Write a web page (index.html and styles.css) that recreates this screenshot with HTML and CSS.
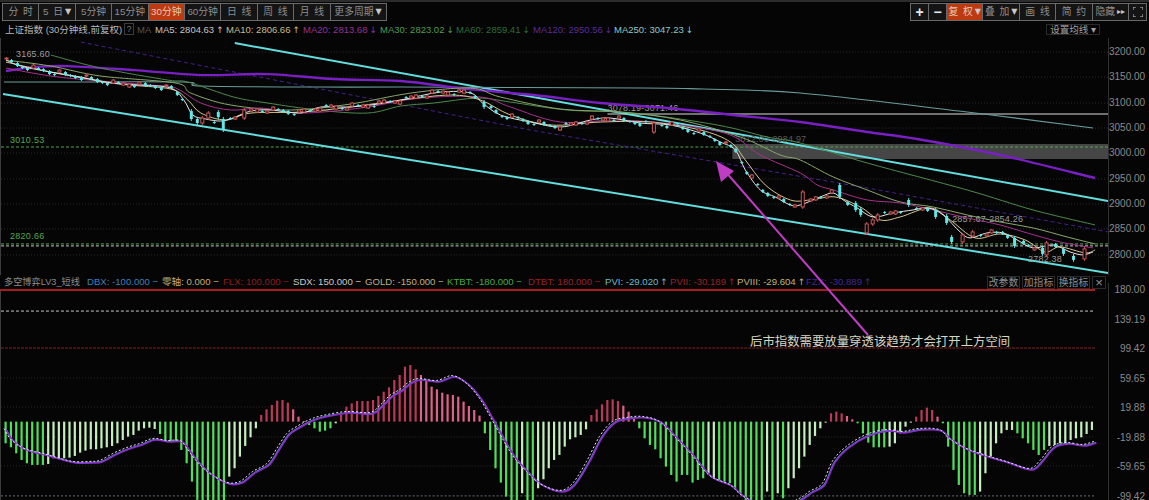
FILE: index.html
```html
<!DOCTYPE html>
<html lang="zh-CN">

<head>
    <meta charset="UTF-8">
    <meta name="viewport" content="width=device-width, initial-scale=1.0">
    <title>上证指数 30分钟线</title>
    <link rel="stylesheet" href="styles.css">
</head>

<body>
    <div class="terminal">
        <div class="toolbar">
            <div class="tool-group">
                <div class="tool-btn">分 时</div>
                <div class="tool-btn">5 日<span class="caret">▼</span></div>
                <div class="tool-btn">5分钟</div>
                <div class="tool-btn">15分钟</div>
                <div class="tool-btn active">30分钟</div>
                <div class="tool-btn">60分钟</div>
                <div class="tool-btn">日 线</div>
                <div class="tool-btn">周 线</div>
                <div class="tool-btn">月 线</div>
                <div class="tool-btn wide">更多周期<span class="caret">▼</span></div>
            </div>
            <div class="tool-group">
                <div class="tool-btn small strong">+</div>
                <div class="tool-btn small strong">−</div>
                <div class="tool-btn active">复 权<span class="caret">▼</span></div>
                <div class="tool-btn">叠 加<span class="caret">▼</span></div>
                <div class="tool-btn">画 线</div>
                <div class="tool-btn">简 约</div>
                <div class="tool-btn">隐藏<span class="caret">▸▸</span></div>
                <div class="tool-btn tiny">
                    <svg width="10" height="10" viewBox="0 0 10 10">
                        <path class="corner" d="M0 3V0H3M7 0H10V3M10 7V10H7M3 10H0V7" />
                    </svg>
                </div>
            </div>
        </div>

        <div class="info-row">
            <span class="index-name">上证指数 (30分钟线,前复权)</span>
            <span class="help-box">?</span>
            <span class="ma-title">MA</span>
            <span class="ma5">MA5: 2804.63<b>↑</b></span>
            <span class="ma10">MA10: 2806.66<b>↑</b></span>
            <span class="ma20">MA20: 2813.68<b>↓</b></span>
            <span class="ma30">MA30: 2823.02<b>↓</b></span>
            <span class="ma60">MA60: 2859.41<b>↓</b></span>
            <span class="ma120">MA120: 2950.56<b>↓</b></span>
            <span class="ma250">MA250: 3047.23<b>↓</b></span>
            <span class="ma-setting">设置均线 ▾</span>
        </div>

        <div class="main-panel">
            <svg id="mainChart" class="plot" viewBox="0 38 1108 237" width="1108" height="237">
                <g class="grid">
                    <path d="M0 52H1108M0 77H1108M0 103H1108M0 128H1108M0 153H1108M0 179H1108M0 204H1108M0 229H1108M0 255H1108" />
                </g>
                <rect class="zone" x="732" y="144" width="376" height="15" />
                <path class="flat-grey" d="M607 114H1108" />
                <path class="level-green" d="M0 147H1108M0 244H1108" />
                <path class="level-white" d="M0 246H1108" />
                <path class="channel-dash" d="M80 42L530 130L867 188L1108 232" />
                <path class="channel" d="M234 43L1108 201M2 94L1108 273" />
                <text class="level-label" x="9" y="143">3010.53</text>
                <text class="level-label" x="9" y="239">2820.66</text>
                <text class="price-label" x="15" y="57">3165.60</text>
                <text class="price-label" x="607" y="111">3078.19-3071.46</text>
                <text class="price-label dim" x="735" y="142">3012.00-2984.97</text>
                <text class="price-label" x="952" y="222">2857.67-2854.26</text>
                <text class="price-label" x="1028" y="262">2782.38</text>
            </svg>
            <div class="axis main-axis">
                <div>3200.00</div>
                <div>3150.00</div>
                <div>3100.00</div>
                <div>3050.00</div>
                <div>3000.00</div>
                <div>2950.00</div>
                <div>2900.00</div>
                <div>2850.00</div>
                <div>2800.00</div>
            </div>
        </div>

        <div class="indicator-row">
            <span class="ind-name">多空博弈LV3_短线</span>
            <span class="dbx">DBX: -100.000 −</span>
            <span class="zero">零轴: 0.000 −</span>
            <span class="flx">FLX: 100.000 −</span>
            <span class="sdx">SDX: 150.000 −</span>
            <span class="gold">GOLD: -150.000 −</span>
            <span class="ktbt">KTBT: -180.000 −</span>
            <span class="dtbt">DTBT: 180.000 −</span>
            <span class="pvi">PVI: -29.020<b>↑</b></span>
            <span class="pvii">PVII: -30.189<b>↑</b></span>
            <span class="pviii">PVIII: -29.604<b>↑</b></span>
            <span class="fzx">FZX: -30.889<b>↑</b></span>
            <div class="ind-buttons">
                <span class="ind-btn">改参数</span>
                <span class="ind-btn">加指标</span>
                <span class="ind-btn">换指标</span>
                <span class="ind-btn close">×</span>
            </div>
        </div>

        <div class="sub-panel">
            <svg id="subChart" class="plot" viewBox="0 291 1108 209" width="1108" height="209">
                <path class="grid" d="M0 378H1095M0 407H1095M0 437H1095M0 466H1095" />
                <path class="level-white" d="M0 311H1095" />
                <path class="level-red" d="M0 348H1095" />
                <path class="level-low" d="M0 496H1095" />
            </svg>
            <div class="axis sub-axis">
                <div>180.00</div>
                <div>139.19</div>
                <div>99.42</div>
                <div>59.65</div>
                <div>19.88</div>
                <div>-19.88</div>
                <div>-59.65</div>
                <div>-99.42</div>
            </div>
        </div>

        <!-- seta desenhada por cima dos paineis -->
        <svg class="arrow-layer" viewBox="0 0 1149 500" width="1149" height="500">
            <path class="arrow-line" d="M868 335L724 170" />
            <path class="arrow-head" d="M716 161L734 171L721 182Z" />
        </svg>
        <div class="note">后市指数需要放量穿透该趋势才会打开上方空间</div>
    </div>

    <script src="chart.js"></script>
</body>

</html>
```

FILE: styles.css
```css
* {
    margin: 0;
    padding: 0;
    box-sizing: border-box;
}

body {
    background-color: #050505;
    font-family: "Liberation Sans", "Noto Sans CJK SC", sans-serif;
    overflow: hidden;
}

b {
    font-family: "DejaVu Sans", sans-serif;
    font-size: 9px;
    font-weight: normal;
    margin-left: 2px;
}

.terminal {
    position: relative;
    width: 1149px;
    height: 500px;
    display: flex;
    flex-direction: column;
    overflow: hidden;
    background-color: #050505;
}

/* Toolbar */
.toolbar {
    height: 22px;
    padding: 1px 2px 0 2px;
    display: flex;
    justify-content: space-between;
    border-top: 2px solid #2c2c2c;
}

.tool-group {
    display: flex;
    height: 18px;
    border: 1px solid #6a6a6a;
}

.tool-btn {
    width: 36.4px;
    display: flex;
    justify-content: center;
    align-items: center;
    color: #8f8f8f;
    font-size: 9.8px;
    line-height: 1;
    word-spacing: 2px;
    white-space: pre;
    background-color: #141414;
    border-right: 1px solid #6a6a6a;
}

.tool-btn:last-child {
    border-right: none;
}

.tool-btn.wide {
    width: 55px;
}

.tool-btn.small {
    width: 18px;
}

.tool-btn.tiny {
    width: 17px;
}

.tool-btn.strong {
    color: #e8e8e8;
    font-size: 14px;
    font-weight: bold;
}

.tool-btn.active {
    background-color: #bd3a10;
    color: #e4c8b8;
}

.caret {
    font-family: "DejaVu Sans", sans-serif;
    font-size: 8px;
    color: #c8c8c8;
    margin-left: 2px;
}

.corner {
    fill: none;
    stroke: #c8c8c8;
    stroke-width: 1;
}

/* Info row */
.info-row {
    height: 16px;
    padding: 0 0 2px 5px;
    display: flex;
    align-items: center;
    font-size: 9.5px;
    white-space: nowrap;
}

.info-row span {
    flex: none;
}

.index-name {
    width: 119px;
    color: #b8b8b8;
}

.help-box {
    width: 10px;
    height: 12px;
    line-height: 11px;
    text-align: center;
    border: 1px solid #3c3c3c;
    color: #777;
    font-size: 9px;
    margin-right: 3px;
}

.ma-title {
    width: 18px;
    color: #555;
}

.ma5 {
    width: 71px;
    color: #c4c4c4;
}

.ma10 {
    width: 77px;
    color: #c9bb8a;
}

.ma20 {
    width: 77px;
    color: #96309a;
}

.ma30 {
    width: 76px;
    color: #4f9c4f;
}

.ma60 {
    width: 77px;
    color: #2c6e38;
}

.ma120 {
    width: 81px;
    color: #5a2a9c;
}

.ma250 {
    width: 90px;
    color: #8cc8c8;
}

.ma-setting {
    margin-left: auto;
    margin-right: 49px;
    height: 11px;
    width: 54px;
    line-height: 10px;
    text-align: center;
    border: 1px solid #2a2a2a;
    color: #a0a0a0;
}

/* Panels */
.main-panel {
    height: 237px;
    display: flex;
}

.sub-panel {
    height: 209px;
    display: flex;
}

.plot {
    display: block;
    flex: none;
    border-left: 1px solid #3c3c3c;
    overflow: hidden;
}

.axis {
    flex: 1;
    border-left: 1px solid #303030;
    color: #8a8a8a;
    font-size: 10px;
    text-align: right;
    padding-right: 4px;
}

.main-axis {
    padding-top: 7px;
}

.main-axis div {
    height: 25.35px;
    line-height: 14px;
}

.sub-axis {
    margin-top: -8px;
}

.sub-axis div {
    height: 29.5px;
    line-height: 14px;
}

/* Indicator header */
.indicator-row {
    position: relative;
    height: 16px;
    padding: 0 0 2px 4px;
    display: flex;
    align-items: center;
    font-size: 9.6px;
    white-space: nowrap;
    border-bottom: 2px solid #a81c1c;
    margin-right: 54px;
}

.indicator-row > span {
    flex: none;
}

.ind-name {
    width: 83px;
    color: #8c8c8c;
    font-size: 9.2px;
}

.dbx {
    width: 75px;
    color: #3f7fb8;
}

.zero {
    width: 61px;
    color: #c4ab70;
}

.flx {
    width: 70px;
    color: #8c1c22;
}

.sdx {
    width: 72px;
    color: #c8c8c8;
}

.gold {
    width: 82px;
    color: #c0ae7c;
}

.ktbt {
    width: 81px;
    color: #48a848;
}

.dtbt {
    width: 77px;
    color: #9a2026;
}

.pvi {
    width: 65px;
    color: #70b8c8;
}

.pvii {
    width: 67px;
    color: #9a2026;
}

.pviii {
    width: 69px;
    color: #c0b478;
}

.fzx {
    width: 84px;
    color: #43288c;
}

.ind-buttons {
    position: absolute;
    right: -11px;
    top: 1px;
    display: flex;
    gap: 2px;
}

.ind-btn {
    width: 33px;
    height: 13px;
    line-height: 12px;
    text-align: center;
    color: #909090;
    font-size: 9.8px;
    border: 1px solid #2c2c2c;
}

.ind-btn.close {
    width: 14px;
    font-size: 13px;
}

/* Chart strokes */
.grid path,
path.grid {
    stroke: #2c2c2c;
    stroke-width: 1;
    stroke-dasharray: 1 2;
    fill: none;
}

.zone {
    fill: #464646;
}

.flat-grey {
    stroke: #707070;
    stroke-width: 2;
    fill: none;
}

.level-green {
    stroke: #4fa84f;
    stroke-width: 1;
    stroke-dasharray: 3 2;
    fill: none;
}

.level-white {
    stroke: #c8c8c8;
    stroke-width: 1;
    stroke-dasharray: 3 2;
    fill: none;
}

.level-red {
    stroke: #8a2020;
    stroke-width: 1;
    stroke-dasharray: 3 1;
    fill: none;
}

.level-low {
    stroke: #6c6c80;
    stroke-width: 1;
    stroke-dasharray: 2 2;
    fill: none;
}

.channel {
    stroke: #62dede;
    stroke-width: 2;
    fill: none;
}

.channel-dash {
    stroke: #46208c;
    stroke-width: 1;
    stroke-dasharray: 4 3;
    fill: none;
}

.level-label {
    fill: #52a852;
    font-size: 9px;
    letter-spacing: 0.3px;
}

.price-label {
    fill: #9c9c9c;
    font-size: 9px;
    letter-spacing: 0.2px;
}

.price-label.dim {
    fill: #5c5c5c;
}

.line {
    fill: none;
    stroke-linejoin: round;
}

.line-dotted {
    stroke-dasharray: 2 2;
}

.arrow-layer {
    position: absolute;
    left: 0;
    top: 0;
    pointer-events: none;
}

.arrow-line {
    stroke: #c03cc4;
    stroke-width: 2;
    fill: none;
}

.arrow-head {
    fill: #c03cc4;
}

.note {
    position: absolute;
    left: 750px;
    top: 332px;
    color: #d6d6c4;
    font-family: "Noto Sans CJK SC", sans-serif;
    font-size: 12.4px;
    line-height: 18px;
    white-space: nowrap;
}
```

FILE: chart.js
```js
const NS = 'http://www.w3.org/2000/svg';
const mainChart = document.getElementById('mainChart');
const subChart = document.getElementById('subChart');

function addEl(parent, tag, attrs) {
    const el = document.createElementNS(NS, tag);
    for (const key in attrs) {
        el.setAttribute(key, attrs[key]);
    }
    parent.appendChild(el);
    return el;
}

// Curva suave passando pelos pontos (Catmull-Rom)
function smoothPath(points) {
    let d = `M${points[0][0]} ${points[0][1]}`;
    for (let i = 0; i < points.length - 1; i++) {
        const p0 = points[Math.max(i - 1, 0)];
        const p1 = points[i];
        const p2 = points[i + 1];
        const p3 = points[Math.min(i + 2, points.length - 1)];
        const c1x = p1[0] + (p2[0] - p0[0]) / 6;
        const c1y = p1[1] + (p2[1] - p0[1]) / 6;
        const c2x = p2[0] - (p3[0] - p1[0]) / 6;
        const c2y = p2[1] - (p3[1] - p1[1]) / 6;
        d += `C${c1x.toFixed(1)} ${c1y.toFixed(1)} ${c2x.toFixed(1)} ${c2y.toFixed(1)} ${p2[0]} ${p2[1]}`;
    }
    return d;
}

function addLine(parent, points, color, width, extraClass) {
    addEl(parent, 'path', {
        class: extraClass ? `line ${extraClass}` : 'line',
        d: smoothPath(points),
        stroke: color,
        'stroke-width': width,
    });
}

function valueAt(points, x) {
    for (let i = 1; i < points.length; i++) {
        if (x <= points[i][0]) {
            const a = points[i - 1];
            const b = points[i];
            return a[1] + (b[1] - a[1]) * (x - a[0]) / (b[0] - a[0]);
        }
    }
    return points[points.length - 1][1];
}

// Medias moveis do painel principal
const ma250 = [[3, 82], [50, 82], [183, 82], [200, 86], [320, 87], [400, 87], [643, 88], [703, 89], [800, 93], [967, 112], [1093, 128]];
const ma120 = [[5, 71], [33, 67], [67, 66], [133, 70], [200, 75], [267, 74], [333, 79], [400, 81], [467, 89], [533, 95], [600, 103], [667, 108], [733, 115], [800, 122], [867, 132], [917, 139], [1000, 155], [1095, 178]];
const ma60 = [[50, 55], [100, 68], [167, 80], [187, 82], [233, 97], [267, 103], [317, 110], [367, 113], [400, 106], [433, 103], [477, 98], [510, 102], [567, 110], [633, 113], [717, 125], [767, 137], [800, 143], [867, 163], [967, 190], [1033, 210], [1095, 225]];
const ma30 = [[5, 60], [50, 66], [100, 76], [175, 83], [190, 93], [230, 105], [290, 110], [350, 104], [410, 93], [470, 88], [500, 97], [560, 109], [620, 112], [680, 120], [740, 137], [780, 155], [800, 160], [833, 177], [867, 190], [900, 202], [933, 207], [967, 215], [1000, 222], [1033, 228], [1067, 237], [1095, 244]];
const ma20 = [[5, 68], [50, 76], [100, 81], [150, 85], [175, 88], [200, 103], [230, 110], [260, 108], [300, 113], [360, 108], [420, 98], [480, 97], [510, 107], [560, 122], [620, 120], [680, 125], [730, 135], [760, 155], [800, 173], [817, 185], [833, 190], [867, 200], [900, 203], [933, 210], [967, 218], [1000, 225], [1027, 233], [1060, 242], [1093, 248]];
const ma10 = [[5, 62], [60, 74], [120, 84], [170, 89], [187, 100], [200, 113], [225, 120], [250, 113], [300, 112], [350, 107], [400, 100], [450, 95], [480, 100], [510, 115], [550, 125], [600, 122], [650, 122], [700, 130], [730, 142], [745, 160], [765, 185], [790, 200], [810, 200], [835, 197], [860, 207], [880, 220], [900, 217], [930, 208], [950, 220], [975, 238], [1000, 234], [1025, 240], [1045, 252], [1060, 247], [1085, 253], [1095, 250]];
const ma5 = [[5, 60], [20, 66], [50, 72], [80, 77], [110, 83], [140, 85], [170, 88], [183, 100], [192, 115], [205, 119], [220, 121], [232, 118], [250, 111], [270, 110], [300, 113], [320, 107], [345, 107], [370, 105], [400, 100], [440, 92], [470, 93], [482, 103], [500, 115], [530, 122], [560, 127], [590, 120], [610, 118], [640, 123], [670, 125], [700, 133], [720, 142], [735, 150], [745, 170], [760, 190], [775, 197], [790, 205], [800, 205], [820, 197], [833, 193], [843, 200], [857, 208], [873, 217], [893, 213], [913, 210], [928, 208], [943, 215], [960, 232], [970, 238], [987, 233], [1003, 233], [1017, 240], [1033, 248], [1053, 245], [1070, 252], [1083, 255], [1093, 252]];

addLine(mainChart, ma250, '#6a9c9c', 1.1);
addLine(mainChart, ma120, '#7a1fc4', 2.4);
addLine(mainChart, ma60, '#4c8a4c', 1);
addLine(mainChart, ma30, '#8aa868', 1);
addLine(mainChart, ma20, '#a8308c', 1);
addLine(mainChart, ma10, '#d8c890', 1);
addLine(mainChart, ma5, '#e8e8e8', 1);

// K线: as maiores foram lidas da imagem, o resto acompanha a MA5
const bigCandles = [
    [190, 111, 119, 0], [196, 119, 123, 0], [201, 118, 123, 1], [207, 113, 118, 1], [217, 112, 117, 0], [222, 119, 130, 0], [243, 110, 118, 1],
    [483, 102, 107, 0], [653, 123, 132, 1],
    [802, 192, 207, 1], [839, 185, 197, 0], [855, 203, 210, 0], [860, 209, 215, 0], [866, 224, 233, 1], [872, 220, 224, 1], [877, 215, 220, 1],
    [908, 200, 205, 0], [935, 210, 217, 0], [946, 216, 223, 0], [951, 237, 242, 0], [962, 235, 242, 1], [972, 232, 236, 1],
    [1014, 238, 246, 0], [1042, 248, 254, 0], [1046, 243, 255, 1], [1063, 249, 254, 0], [1073, 256, 260, 0], [1084, 249, 259, 1],
];

function drawCandle(x, top, bottom, up, wick) {
    const color = up ? '#c85858' : '#62e6e6';
    addEl(mainChart, 'path', { d: `M${x} ${top - wick}V${bottom + wick}`, stroke: color, 'stroke-width': 1, fill: 'none' });
    addEl(mainChart, 'rect', {
        x: x - 1.5, y: top, width: 3, height: bottom - top,
        fill: up ? '#050505' : color,
        stroke: color,
        'stroke-width': up ? 1 : 0,
    });
}

for (let i = 0; i < 204; i++) {
    const x = 5 + i * 5.33;
    if (bigCandles.some(c => Math.abs(c[0] - x) < 4)) continue;
    const y = valueAt(ma5, x);
    const falling = valueAt(ma5, x + 5) > y + 0.4;
    const up = falling ? i % 5 === 0 : i % 3 !== 0;
    const size = 1 + (i * 7 % 3);
    const shift = (i * 11 % 5) - 2;
    drawCandle(Math.round(x) + 0.5, Math.round(y + shift - size / 2), Math.round(y + shift + size / 2), up, 1);
}
bigCandles.forEach(c => drawCandle(c[0] + 0.5, c[1], c[2], c[3] === 1, 2));

// Histograma do indicador: y de cada barra medido na imagem ampliada 3x
const BASE_Z = 185;
const histogram = [
    250, 262, 280, 300, 310, 315, 315, 315, 312, 295, 295, 295, 293, 288, 278, 272, 268, 268, 265, 262, 258, 250, 240, 230, 225, 212, 205, 203, 207, 222, 240, 245, 245, 270, 310, 365, 420, 430, 430, 430, 430, 430, 350, 325, 290, 258, 232, 205, 165, 148, 135, 122, 120, 128, 148, 170, 183, 195, 205, 215, 212, 205, 190, 165, 140, 130, 123, 123, 123, 120, 108, 95, 82, 60, 45,
    20, 15, 28, 45, 62, 80, 88, 98, 103, 105, 110, 125, 138, 150, 167, 220, 270, 325, 368, 410, 430, 430, 400, 430, 430, 385, 358, 325, 300, 285, 260, 238, 232, 225, 208, 165, 148, 133, 120, 118, 123, 137, 155, 175, 205, 235, 255, 268, 295, 320, 345, 365, 345, 345, 368, 360, 355, 340, 355, 360, 365, 370, 385, 400, 430, 430, 430, 430, 395, 430, 400, 415, 385, 355,
    325, 290, 255, 228, 205, 185, 160, 155, 160, 168, 178, 190, 220, 248, 262, 262, 262, 260, 250, 220, 200, 185, 170, 150, 143, 150, 170, 190, 260, 330, 375, 400, 405, 405, 395, 340, 290, 250, 220, 210, 210, 220, 235, 250, 270, 285, 270, 258, 255, 250, 250, 240, 235, 232, 222, 210,
];

histogram.forEach((z, i) => {
    const x = 4.5 + i * 5.33;
    // compara com tres barras atras para nao piscar a cor em ruido pequeno
    const value = BASE_Z - z;
    const before = i > 2 ? BASE_Z - histogram[i - 3] : 0;
    const growing = value > 0 ? value > before : value <= before;
    let color;
    if (value > 0) {
        color = growing ? '#b83a58' : '#e0608c';
    } else {
        color = growing ? '#4fe05a' : '#c4eebc';
    }
    const y = 360 + Math.min(z, BASE_Z) / 3;
    const h = Math.abs(value) / 3;
    addEl(subChart, 'rect', { x: x - 1, y: y, width: 2.2, height: Math.max(h, 1), fill: color });
});

// Linhas do indicador em coordenadas reais
const indLine = [[4, 430], [10, 440], [20, 448], [30, 452], [43, 455], [57, 459], [73, 463], [90, 463], [100, 462], [113, 455], [127, 449], [140, 445], [153, 440], [167, 442], [180, 442], [187, 450], [197, 463], [210, 475], [227, 484], [240, 483], [253, 473], [267, 465], [277, 450], [287, 435], [297, 428], [310, 421], [323, 417], [347, 413], [370, 414], [380, 407], [390, 397], [400, 391], [410, 383], [420, 380], [437, 382], [453, 377], [467, 385], [480, 400], [490, 417], [500, 435], [513, 457], [527, 473], [540, 485], [560, 492], [573, 485], [587, 463], [600, 438], [613, 423], [627, 419], [643, 418], [660, 423], [677, 440], [693, 457], [710, 477], [730, 486], [740, 495], [752, 502], [775, 510], [800, 500], [810, 493], [823, 485], [833, 463], [847, 448], [867, 436], [887, 431], [903, 433], [920, 430], [940, 431], [950, 440], [967, 450], [987, 457], [1007, 463], [1030, 470], [1040, 463], [1053, 448], [1067, 444], [1083, 446], [1095, 443]];
addLine(subChart, indLine.map(p => [p[0] + 1, p[1] - 0.5]), '#5a8ce0', 1.2);
addLine(subChart, indLine.map(p => [p[0] + 1.5, p[1]]), '#8a2cc8', 1.6);
addLine(subChart, indLine.map(p => [p[0] - 1, p[1] - 1.5]), '#e8e8e8', 1, 'line-dotted');
```
